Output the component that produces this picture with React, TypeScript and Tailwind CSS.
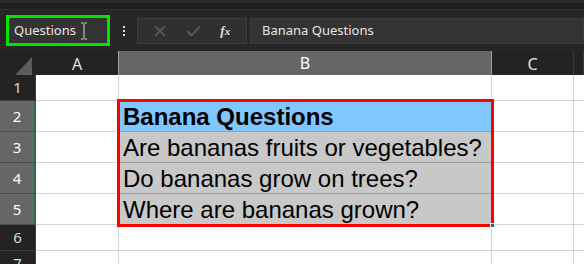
import React from 'react';

const cols = ['A', 'B', 'C', ''];
const gridCols = 'grid grid-cols-[36px_83px_373px_82px_1fr]';

const rows = [
  { n: 1, h: 'h-[26px]' },
  { n: 2, h: 'h-[31px]' },
  { n: 3, h: 'h-[31px]' },
  { n: 4, h: 'h-[31px]' },
  { n: 5, h: 'h-[31px]' },
  { n: 6, h: 'h-[26px]' },
  { n: 7, h: 'h-[26px]' },
];

const questions = [
  'Are bananas fruits or vegetables?',
  'Do bananas grow on trees?',
  'Where are bananas grown?',
];

const ui = { fontFamily: '"Noto Sans", "Open Sans", sans-serif' };
const cellFont = { fontFamily: '"Liberation Sans", Arial, sans-serif' };

const App = () => {
  const selected = (n: number) => n >= 2 && n <= 5;

  return (
    <div className="w-[584px] h-[264px] overflow-hidden bg-[#262626] flex flex-col" style={ui}>
      {/* top strip */}
      <div className="shrink-0 h-[3px] bg-[#2c2c2c]" />
      <div className="shrink-0 h-[6px] bg-[#1f1f1f]" />
      <div className="shrink-0 h-[1px] border-t border-dotted border-[#3c3c3c]" />

      {/* formula bar row */}
      <div className="shrink-0 h-[41px] flex items-center bg-[#262626]">
        <div className="ml-[6px] w-[104px] h-[31px] border-[3px] border-[#00e600] bg-[#333333] flex items-center pl-[5px] text-[13px] text-[#e6e6e6]">
          <span>Questions</span>
          <svg width="8" height="18" viewBox="0 0 8 18" className="ml-[4px]">
            <path d="M1 1h2.5M4.5 1H7M4 1.5v15M1 17h2.5M4.5 17H7" stroke="#d8d8d8" strokeWidth="1" fill="none" />
          </svg>
        </div>
        <div className="w-[27px] flex flex-col items-center gap-[2px]">
          <div className="w-[2px] h-[2px] bg-[#e0e0e0]" />
          <div className="w-[2px] h-[2px] bg-[#e0e0e0]" />
          <div className="w-[2px] h-[2px] bg-[#e0e0e0]" />
        </div>
        <div className="w-[110px] h-[26px] bg-[#303030] border border-[#3d3d3d] flex items-center justify-around px-[6px]">
          <svg width="12" height="12" viewBox="0 0 12 12">
            <path d="M1 1l10 10M11 1L1 11" stroke="#5e5e5e" strokeWidth="1.6" />
          </svg>
          <svg width="15" height="12" viewBox="0 0 15 12">
            <path d="M1 6l4.5 4.5L14 1.5" stroke="#5e5e5e" strokeWidth="1.8" fill="none" />
          </svg>
          <span className="text-[13px] italic font-bold text-[#e0e0e0]" style={{ fontFamily: '"Liberation Serif", serif' }}>
            f<span className="text-[11px]">x</span>
          </span>
        </div>
        <div className="ml-[3px] flex-1 h-[26px] bg-[#333333] border border-[#3d3d3d] flex items-center pl-[11px] text-[13px] text-[#e6e6e6]">
          Banana Questions
        </div>
      </div>

      {/* column headers */}
      <div className={`${gridCols} shrink-0 h-[24px] bg-[#232323]`}>
        <div className="relative">
          <svg width="18" height="18" viewBox="0 0 18 18" className="absolute right-[3px] bottom-[2px]">
            <path d="M17 0v18H0z" fill="#5c5c5c" />
          </svg>
        </div>
        {cols.map((c, i) => (
          <div
            key={i}
            className={`flex items-center justify-center text-[16px] border-r ${
              c === 'B'
                ? 'bg-[#666666] text-white border-b-2 border-b-[#217346] border-r-[#a0a0a0]'
                : 'text-[#e0e0e0] border-[#3a3a3a] border-b border-b-[#d4d4d4]'
            } ${c === 'A' ? 'border-r-[#a0a0a0]' : ''}`}
          >
            {c}
          </div>
        ))}
      </div>

      {/* sheet */}
      <div className={`${gridCols} shrink-0 bg-white`}>
        {rows.map((r) => (
          <React.Fragment key={r.n}>
            <div
              className={`${r.h} flex items-center justify-center text-[15px] border-b border-r ${
                selected(r.n)
                  ? 'bg-[#666666] text-white border-b-[#4a4a4a] border-r-2 border-r-[#217346]'
                  : 'bg-[#232323] text-[#d8d8d8] border-b-[#3a3a3a] border-r-[#3a3a3a]'
              }`}
            >
              {r.n}
            </div>
            <div className={`${r.h} border-b border-r border-[#d4d4d4]`} />
            {r.n === 2 ? (
              <div
                className="row-span-4 relative z-10 flex flex-col outline-[3px] outline-solid outline-[#ff0000] -outline-offset-1 text-[24px] text-black bg-[#c8c8c8]"
                style={cellFont}
              >
                <div className="h-[31px] leading-[31px] bg-[#80c6ff] font-bold pl-[4px] border-b border-[#8aa0b4]">
                  Banana Questions
                </div>
                {questions.map((q, i) => (
                  <div key={q} className={`h-[31px] leading-[31px] pl-[4px] ${i < 2 ? 'border-b border-[#9a9a9a]' : ''} whitespace-nowrap`}>
                    {q}
                  </div>
                ))}
                <div className="absolute -right-[3px] -bottom-[3px] w-[5px] h-[5px] bg-[#217346] border border-white" />
              </div>
            ) : selected(r.n) ? null : (
              <div className={`${r.h} border-b border-r border-[#d4d4d4]`} />
            )}
            <div className={`${r.h} border-b border-r border-[#d4d4d4]`} />
            <div className={`${r.h} border-b border-[#d4d4d4]`} />
          </React.Fragment>
        ))}
      </div>
    </div>
  );
};

export default App;
